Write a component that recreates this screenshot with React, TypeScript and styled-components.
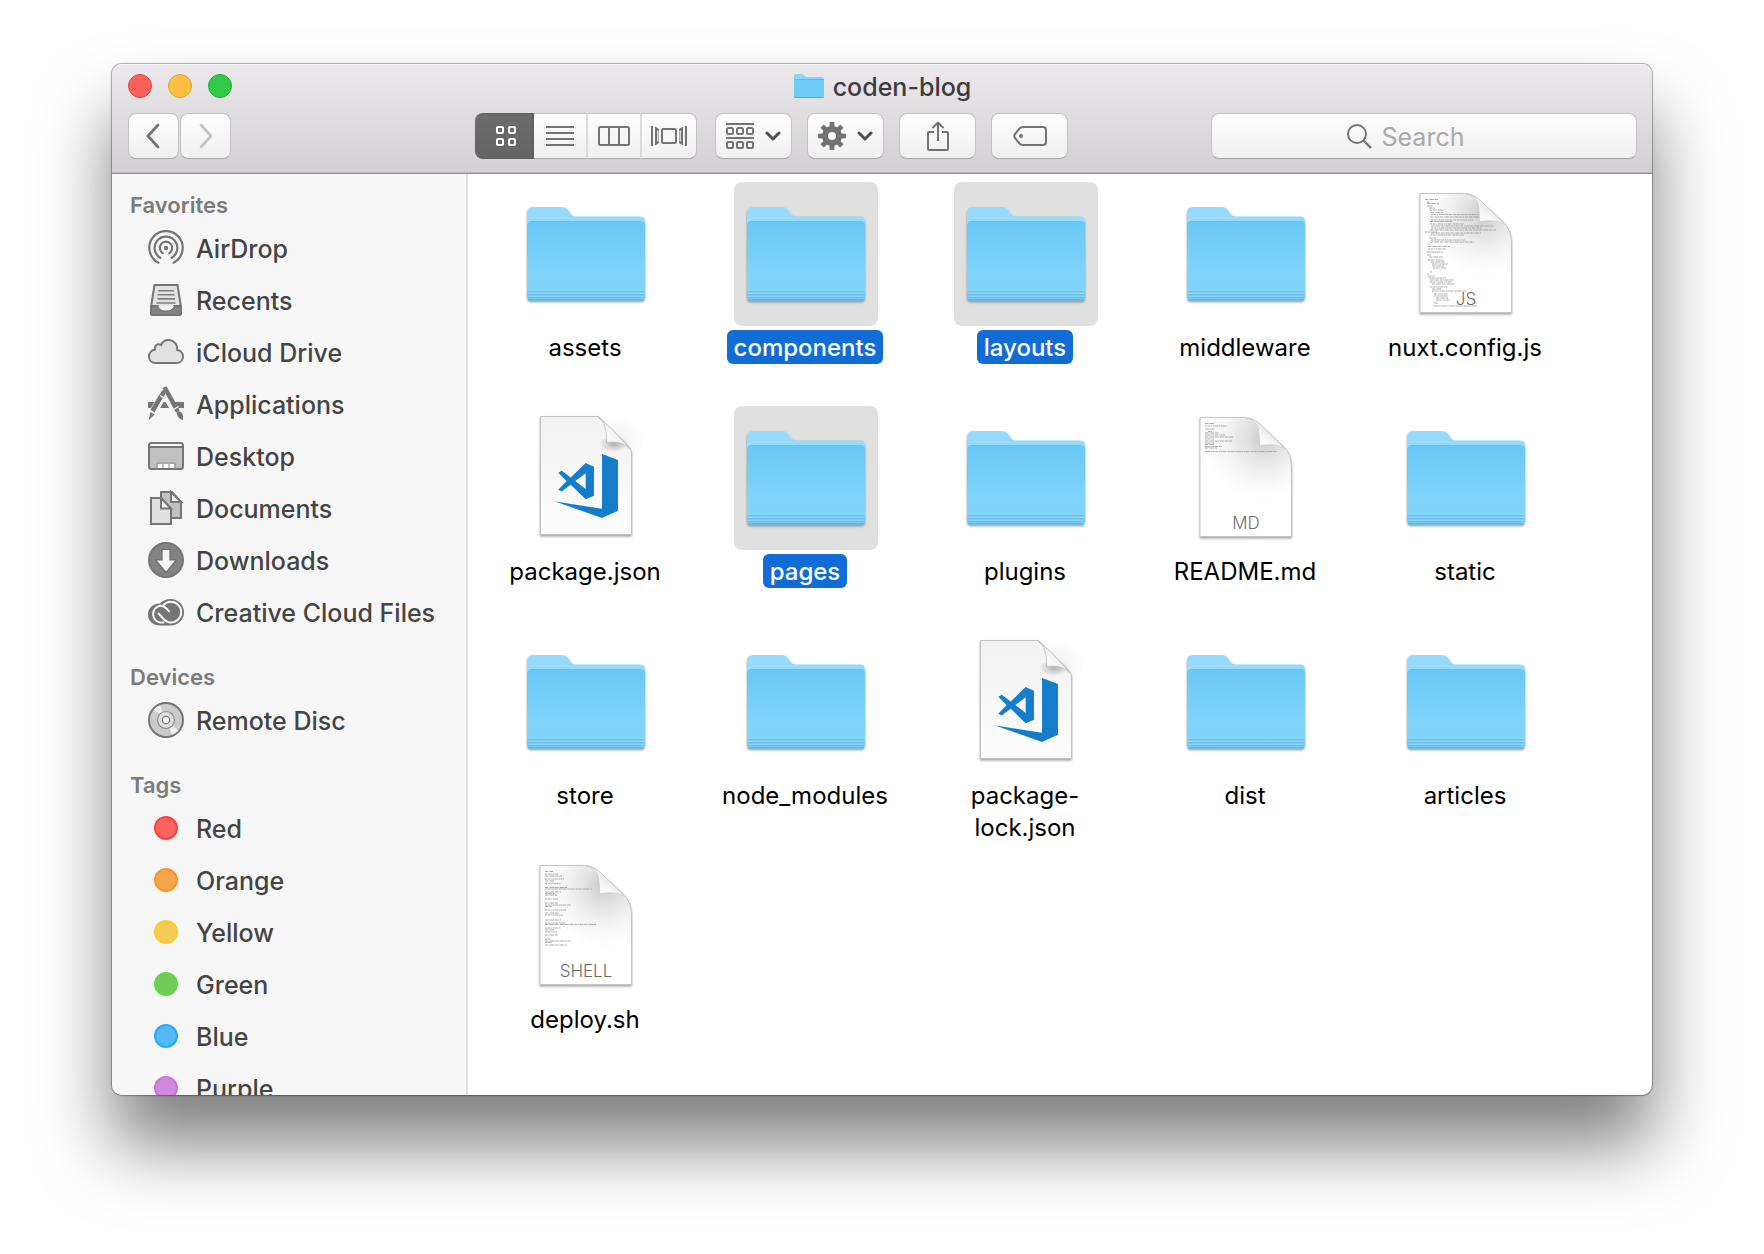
import React from "react";
import styled, { createGlobalStyle } from "styled-components";

const GlobalStyle = createGlobalStyle`
  *, *::before, *::after { box-sizing: border-box; }
  body {
    margin: 0;
    background: #fff;
    font-family: Inter, "Liberation Sans", sans-serif;
    font-size: 25px;
    line-height: 32px;
    color: #000;
  }
  button, input { font: inherit; color: inherit; }
  button { padding: 0; border: 0; background: none; }
  ul { list-style: none; margin: 0; padding: 0; }
  svg { display: block; flex: none; }
`;

/* ---------- layout ---------- */

const Desktop = styled.div`
  display: flex;
  height: 100vh;
  padding: 64px 112px 159px;
  overflow: hidden;
`;

const Window = styled.section`
  flex: 1;
  min-width: 0;
  display: flex;
  flex-direction: column;
  border-radius: 10px;
  overflow: hidden;
  background: #fff;
  box-shadow: 0 0 1px 1px rgba(0, 0, 0, 0.32), 0 50px 72px rgba(0, 0, 0, 0.5);
`;

const Header = styled.header`
  flex: none;
  padding: 0 15px 14px 16px;
  border-bottom: 1px solid #8f8d8f;
  background: linear-gradient(#ebe9ec, #d2d0d3);
  box-shadow: inset 0 1px 0 #f6f5f6, inset 0 -1px 0 #bdbbbe;
`;

const TitleBar = styled.div`
  display: grid;
  grid-template-columns: 1fr auto 1fr;
  align-items: center;
  height: 44px;
`;

const Lights = styled.div`
  display: flex;
  gap: 16px;
`;

const Light = styled.button<{ $fill: string; $edge: string }>`
  width: 24px;
  height: 24px;
  border-radius: 50%;
  border: 1px solid ${(p) => p.$edge};
  background: ${(p) => p.$fill};
`;

const Title = styled.h1`
  display: flex;
  align-items: center;
  gap: 8px;
  margin: 0;
  font-size: 25px;
  font-weight: 500;
  line-height: 32px;
  color: #3d3a3e;
  span { padding-top: 2px; }
`;

const Toolbar = styled.div`
  display: flex;
  align-items: center;
  margin-top: 5px;
`;

const Nav = styled.nav`
  flex: 0 0 347px;
  display: flex;
  gap: 1px;
`;

const Tools = styled.div`
  display: flex;
  gap: 15px;
  margin-left: 18px;
`;

const ToolButton = styled.button<{ $width: number }>`
  display: flex;
  align-items: center;
  justify-content: center;
  gap: 11px;
  width: ${(p) => p.$width}px;
  height: 46px;
  border: 1px solid #c3c1c4;
  border-bottom-color: #a9a7aa;
  border-radius: 8px;
  background: linear-gradient(#fdfdfd, #f0f0f0);
  color: #737373;
`;

const Segments = styled.div`
  display: flex;
`;

const Segment = styled.button<{ $active?: boolean }>`
  display: flex;
  align-items: center;
  justify-content: center;
  width: 54px;
  height: 46px;
  border: solid #c3c1c4;
  border-width: 1px 2px 1px 0;
  border-right-color: #dcdbdc;
  border-bottom-color: #a9a7aa;
  background: linear-gradient(#fdfdfd, #f0f0f0);
  color: #737373;
  &:first-child {
    width: 59px;
    padding-left: 5px;
    border-radius: 8px 0 0 8px;
  }
  &:last-child {
    width: 55px;
    border-radius: 0 8px 8px 0;
    border-right: 1px solid #c3c1c4;
  }
  ${(p) => p.$active && "background: linear-gradient(#6c6c6c, #646464); border-color: #606060; color: #fff;"}
`;

const SearchField = styled.label`
  flex: 0 1 426px;
  min-width: 180px;
  margin-left: auto;
  display: flex;
  align-items: center;
  justify-content: center;
  gap: 10px;
  height: 46px;
  border: 1px solid #c3c1c4;
  border-bottom-color: #a3a1a4;
  border-radius: 8px;
  background: linear-gradient(#fdfdfd, #f0f0f0);
  color: #737373;
  input {
    width: 120px;
    padding: 2px 0 0;
    border: 0;
    outline: 0;
    background: transparent;
  }
  input::placeholder { color: #a9a9a9; opacity: 1; }
`;

const Body = styled.div`
  flex: 1;
  min-height: 0;
  display: flex;
`;

const Sidebar = styled.aside`
  flex: 0 0 356px;
  display: flex;
  flex-direction: column;
  gap: 20px;
  padding-top: 12px;
  overflow: hidden;
  border-right: 2px solid #dedede;
  background: #f6f6f6;
`;

const SideHeading = styled.h2`
  margin: 0;
  padding: 2px 0 0 18px;
  font-size: 22px;
  line-height: 34px;
  font-weight: 600;
  color: #7b7b7b;
`;

const SideLink = styled.a`
  display: flex;
  align-items: center;
  gap: 12px;
  height: 52px;
  padding-left: 36px;
  font-weight: 500;
  color: #444;
  text-decoration: none;
  white-space: nowrap;
`;

const SideLabel = styled.span`
  padding-top: 2px;
`;

const TagDot = styled.span<{ $fill: string; $edge: string }>`
  width: 24px;
  height: 24px;
  margin: 0 6px;
  border-radius: 50%;
  border: 2px solid ${(p) => p.$edge};
  background: ${(p) => p.$fill};
`;

const FileGrid = styled.ul`
  && { padding: 8px 0 0 8px; }
  flex: 1;
  min-width: 0;
  display: grid;
  grid-template-columns: repeat(auto-fill, 220px);
  grid-auto-rows: 224px;
  align-content: start;
  overflow: hidden;
`;

const FileButton = styled.button`
  display: flex;
  flex-direction: column;
  align-items: center;
  gap: 4px;
  width: 100%;
`;

const FileIcon = styled.span<{ $selected?: boolean }>`
  border-radius: 8px;
  background: ${(p) => (p.$selected ? "#e0e0e0" : "transparent")};
`;

const FileName = styled.span<{ $selected?: boolean }>`
  max-width: 180px;
  margin-right: 2px;
  padding: 2px 7px 0;
  border-radius: 6px;
  font-size: 24px;
  font-weight: ${(p) => (p.$selected ? 500 : 400)};
  background: ${(p) => (p.$selected ? "#116cd6" : "transparent")};
  color: ${(p) => (p.$selected ? "#fff" : "#000")};
`;

/* ---------- file drawings ---------- */

const HiddenSvg = styled.svg`
  position: absolute;
`;

const Defs = () => (
  <HiddenSvg width="0" height="0" aria-hidden="true">
    <defs>
      <linearGradient id="front" x1="0" y1="0" x2="0" y2="1">
        <stop offset="0" stopColor="#69c8f6" />
        <stop offset="0.7" stopColor="#80d4fa" />
        <stop offset="0.86" stopColor="#7fd2f8" />
        <stop offset="1" stopColor="#74c6ee" />
      </linearGradient>
      <radialGradient id="paper" gradientUnits="userSpaceOnUse" cx="90" cy="32" r="62">
        <stop offset="0" stopColor="#c9c9c9" />
        <stop offset="0.3" stopColor="#e2e2e2" />
        <stop offset="0.65" stopColor="#f5f5f5" />
        <stop offset="1" stopColor="#ffffff" />
      </radialGradient>
      <linearGradient id="codePaper" x1="0" y1="0" x2="0" y2="1">
        <stop offset="0" stopColor="#f1f1f1" />
        <stop offset="1" stopColor="#fdfdfd" />
      </linearGradient>
      <linearGradient id="curl" x1="0.1" y1="0.9" x2="0.7" y2="0.3">
        <stop offset="0" stopColor="#ffffff" />
        <stop offset="0.5" stopColor="#f8f8f8" />
        <stop offset="1" stopColor="#dedede" />
      </linearGradient>
      <radialGradient id="curlShade" cx="0.5" cy="0.5" r="0.5">
        <stop offset="0" stopColor="#000" stopOpacity="0.34" />
        <stop offset="1" stopColor="#000" stopOpacity="0" />
      </radialGradient>
      <filter id="drop" x="-10%" y="-10%" width="120%" height="125%">
        <feDropShadow dx="0" dy="1.5" stdDeviation="1.3" floodColor="#000" floodOpacity="0.38" />
      </filter>
    </defs>
  </HiddenSvg>
);

const FolderArt = () => (
  <svg width="144" height="144" viewBox="0 0 144 144" aria-hidden="true">
    <g filter="url(#drop)">
      <path d="M13 31q0-6 6-6h29q4 0 6.5 3.5l2 3q2 3 5 3h64.500q5 0 5 5V114.500q0 4-4 4H17q-4 0-4-4z" fill="#97dcfe" />
      <path d="M13 44q0-4.500 4.500-4.500h108.500q5 0 5 4.500V114.500q0 4-4 4H17q-4 0-4-4z" fill="url(#front)" />
    </g>
    <path d="M14 40.500q1-1 4-1h107.500q4 0 5 1.500" fill="none" stroke="#5fbbe8" strokeWidth="0.800" />
    <path d="M13.500 109.500h117M13.500 112.500h117M13.500 115.500h117" stroke="#62b4dc" strokeOpacity="0.550" />
    <path d="M13.500 108.500h117M13.500 111.500h117M13.500 114.500h117" stroke="#92dcfc" strokeOpacity="0.500" />
    <path d="M14.500 117.800h115" stroke="#5eacd4" strokeWidth="1.200" />
  </svg>
);

type Line = [number, number, number];

const JS_LINES: Line[] = [
  [31, 17.5, 13], [33, 20, 3], [33, 21.5, 12], [33, 24, 6], [35, 26, 6], [36, 28, 14],
  [37, 30.5, 12], [37, 32.5, 48], [36, 35, 50], [37, 38, 42], [36, 39.5, 22], [36, 42, 34],
  [37, 44, 64], [37, 46, 50], [36, 48, 66], [31, 50, 12], [37, 51, 50], [36, 53, 34],
  [35, 56, 7], [37, 58, 34], [36, 60, 44], [34, 62, 2], [34, 64.5, 22], [34, 67, 18],
  [33, 70, 16], [33, 73, 4], [35, 75, 14], [34, 78, 16], [37, 80, 14], [38, 82, 16],
  [38, 84, 12], [39, 86, 14], [36, 90, 2], [33, 92, 2], [34, 94, 7], [35, 96, 17],
  [36, 98, 24], [36, 100, 22], [38, 102, 22], [36, 105, 18], [38, 107, 9], [38, 109, 34],
  [40, 112, 14], [40, 114, 14], [42, 116, 12], [42, 118, 14], [40, 121, 4], [39, 124, 44],
];

const MD_LINES: Line[] = [
  [31, 17.5, 9], [31, 20, 23], [31, 23, 10], [34, 25.5, 4], [31, 27, 14], [31, 29, 20],
  [31, 31, 28], [31, 33, 9], [31, 35, 27], [31, 37, 10], [31, 38.5, 9], [31, 40.5, 17],
  [31, 42, 12], [31, 45.5, 72],
];

const SH_LINES: Line[] = [
  [31, 17.5, 8], [31, 20, 14], [31, 22, 17], [31, 25, 19], [31, 27, 10], [31, 29.5, 16],
  [31, 33.5, 22], [31, 35, 47], [31, 38, 16], [31, 39.5, 10], [31, 41, 12], [31, 45, 13],
  [31, 49, 13], [31, 51, 26], [31, 52.5, 7], [31, 56, 22], [31, 59, 14], [31, 61, 18],
  [31, 66, 16], [31, 69, 20], [31, 70.5, 51], [31, 74, 16], [31, 76, 10], [31, 78, 12],
  [31, 81, 13], [31, 85, 6], [31, 87, 26], [31, 88.5, 7], [31, 91, 22],
];

const TextFileArt = ({ kind, lines }: { kind: string; lines: Line[] }) => (
  <svg width="144" height="144" viewBox="0 0 144 144" aria-hidden="true">
    <path
      d="M26 11.500H69C77 11.500 83 15 89 21L108 39C114.500 45 117.500 51 117.500 62V130.500H26z"
      fill="url(#paper)" stroke="#b9b9b9" strokeWidth="0.800" filter="url(#drop)"
    />
    {lines.map(([x, y, w], i) => (
      <path key={i} d={`M${x} ${y}h${w}`} stroke="#969696" strokeWidth="0.800" strokeDasharray={i % 2 ? "2 0.5 3 0.7 1 0.5" : "3 0.6 1 0.5 4 0.7"} />
    ))}
    <path d="M72 11.800C82 14 86 20 85.500 39.500C98 38 106 39 112 43.500L89 21C83 15 79 12.500 72 11.800z" fill="url(#curl)" stroke="#c9c9c9" strokeWidth="0.700" />
    <text x="72" y="123" textAnchor="middle" fontFamily="Inter, sans-serif" fontSize="17" fontWeight="300" fill="#6c6c6c">{kind}</text>
  </svg>
);

const JsonFileArt = () => (
  <svg width="144" height="144" viewBox="0 0 144 144" aria-hidden="true">
    <ellipse cx="103" cy="34" rx="28" ry="26" fill="url(#curlShade)" opacity="0.18" />
    <path d="M26.500 10.500H84L115 41Q117.500 44 117.500 48V128.500H26.500z" fill="url(#codePaper)" stroke="#c2c2c2" filter="url(#drop)" />
    <ellipse cx="100" cy="38" rx="15" ry="8" fill="url(#curlShade)" opacity="0.8" />
    <path d="M84 10.500C90 15 93 23 92.500 36.500C102 35 110 37 116 43L100 25z" fill="url(#curl)" stroke="#bdbdbd" strokeWidth="0.800" />
    <g fill="#167dca">
      <path d="M88 48l16 6v50.700L88 112 41 95.500l47 7.200z" />
      <path fillRule="evenodd" d="M71.700 57l8.300 3.700v29l-8.300 3.600-15-14.500-9 6.800-3.400-1.900 8.300-8.700-8.300-8.300 3.400-1.900 9 6.600zM71.700 67.300L61.300 75l10.400 8z" />
    </g>
  </svg>
);

/* ---------- toolbar icons ---------- */

const Chevron = () => (
  <svg width="16" height="10" viewBox="0 0 16 10" fill="none" stroke="#4f4f4f" strokeWidth="3" strokeLinecap="round" strokeLinejoin="round">
    <path d="M2 2l6 6 6-6" />
  </svg>
);

const Arrow = ({ d, color }: { d: string; color: string }) => (
  <svg width="16" height="26" viewBox="0 0 16 26" fill="none" stroke={color} strokeWidth="2.800" strokeLinecap="round" strokeLinejoin="round">
    <path d={d} />
  </svg>
);

const GridIcon = () => (
  <svg width="20" height="20" fill="none" stroke="currentColor" strokeWidth="2">
    {[1, 13].map((y) => [1, 13].map((x) => <rect key={`${x}-${y}`} x={x} y={y} width="6" height="6" rx="1" />))}
  </svg>
);

const ListIcon = () => (
  <svg width="28" height="20" stroke="currentColor" strokeWidth="2">
    <path d="M0 1h28M0 7h28M0 13h28M0 19h28" />
  </svg>
);

const ColumnsIcon = () => (
  <svg width="32" height="20" fill="none" stroke="currentColor" strokeWidth="2">
    <rect x="1" y="1" width="30" height="18" rx="1.500" />
    <path d="M11 1v18M21 1v18" />
  </svg>
);

const CoverIcon = () => (
  <svg width="36" height="20" fill="none" stroke="currentColor">
    <rect x="11" y="3" width="14" height="14" rx="1.500" strokeWidth="2" />
    <path d="M1 0v20M35 0v20" strokeWidth="2" />
    <path d="M4 0.500L8 3v14l-4 2.500zM32 0.500L28 3v14l4 2.500z" fill="currentColor" stroke="none" />
    <path d="M6.800 4.500v11M29.200 4.500v11" stroke="#f7f7f7" strokeWidth="1.200" />
  </svg>
);

const GroupIcon = () => (
  <svg width="28" height="26" fill="none" stroke="currentColor" strokeWidth="2">
    <path d="M0 1h28M0 15h28" />
    {[5, 19].map((y) => [1, 11, 21].map((x) => <rect key={`${x}-${y}`} x={x} y={y} width="6" height="6" rx="1.500" />))}
  </svg>
);

const GearIcon = () => (
  <svg width="28" height="28" viewBox="-14 -14 28 28">
    {[0, 45, 90, 135].map((a) => (
      <path key={a} d="M-3 0L-2.300-14h4.600L3 0 2.300 14h-4.600z" transform={`rotate(${a})`} fill="currentColor" />
    ))}
    <circle r="7" fill="none" stroke="currentColor" strokeWidth="6" />
    <circle r="4" fill="#f7f7f7" />
  </svg>
);

const ShareIcon = () => (
  <svg width="22" height="30" fill="none" stroke="currentColor" strokeWidth="2" strokeLinejoin="round">
    <path d="M7 11H2q-1 0-1 1v16q0 1 1 1h18q1 0 1-1V12q0-1-1-1h-5" />
    <path d="M11 20V1.500M5.500 7L11 1.500 16.500 7" />
  </svg>
);

const TagIcon = () => (
  <svg width="34" height="20" fill="none" stroke="currentColor" strokeWidth="2" strokeLinejoin="round">
    <path d="M10 1h20q3 0 3 3v12q0 3-3 3H10q-2 0-3.500-1.500L2 12q-1.500-2 0-4l4.500-5.500Q8 1 10 1z" />
    <circle cx="8" cy="10" r="2" fill="currentColor" stroke="none" />
  </svg>
);

const SearchIcon = () => (
  <svg width="25" height="26" fill="none" stroke="currentColor" strokeWidth="2">
    <circle cx="10" cy="11" r="9" />
    <path d="M16.500 17.500L24 25" strokeWidth="2.400" />
  </svg>
);

const TitleFolder = () => (
  <svg width="31" height="25" viewBox="0 0 31 25">
    <path d="M0 2q0-2 2-2h6q1.500 0 2.500 1.500L12 3h16q2 0 2 2v18q0 1-1 1H1q-1 0-1-1z" fill="#88d4fb" />
    <path d="M0 5.500h30V22q0 2-1 2H1q-1 0-1-2z" fill="#6fcdf8" />
    <path d="M0 5.500h30" stroke="#5db9e4" />
    <path d="M0.500 23.500h29" stroke="#4fa6cf" />
  </svg>
);

/* ---------- sidebar icons ---------- */

const Glyph = ({ children }: { children: React.ReactNode }) => (
  <svg width="36" height="36" viewBox="0 0 36 36" fill="none" stroke="#757575" strokeWidth="2" aria-hidden="true">{children}</svg>
);

const AirDropIcon = () => (
  <Glyph>
    <g strokeWidth="2.200" strokeLinecap="round">
      <path d="M10.500 32.700A16.700 16.700 0 1 1 25.500 32.700" />
      <path d="M12.300 27.800A11.400 11.400 0 1 1 23.700 27.800" />
      <path d="M14.800 23.200A6.200 6.200 0 1 1 21.200 23.200" />
    </g>
    <circle cx="18" cy="18" r="2.200" fill="#757575" stroke="none" />
  </Glyph>
);

const RecentsIcon = () => (
  <Glyph>
    <path d="M6.500 3h23L33 25v6q0 2-2 2H5q-2 0-2-2v-6z" fill="#e2e2e2" strokeLinejoin="round" />
    <path d="M3 24h7q2 5 8 5t8-5h7v7q0 2-2 2H5q-2 0-2-2z" fill="#828282" />
    <path d="M10 24q2 4.500 8 4.500t8-4.500z" fill="#f3f3f3" stroke="none" />
    <path d="M10 8.700h16M9.500 12.800h17M9.500 16.900h17.500M8.500 21h19" stroke="#808080" strokeWidth="1.600" />
  </Glyph>
);

const CloudIcon = () => (
  <Glyph>
    <path d="M8 29C3.500 29 1 26 1 22.500C1 18.500 4 16 7 15.500C6.500 11 9.500 9 13 11C14.500 7.500 18 5.700 21.500 6C26.500 6.500 29.800 11 29.300 16C33 16.500 35 19.500 35 22.500C35 26 32.500 29 28 29z" fill="#e2e2e2" />
  </Glyph>
);

const ApplicationsIcon = () => (
  <Glyph>
    <path d="M0 19h36" strokeWidth="6" />
    <g stroke="#f6f6f6" strokeWidth="8"><path d="M16 6L30 29M15 9L4 28" /></g>
    <path d="M13.500 9.500L4.500 25" strokeWidth="4.600" />
    <path d="M15.500 6.500L14 9" strokeWidth="4.600" strokeLinecap="round" />
    <path d="M2.500 26l4 2.500L0.500 34.500z" fill="#757575" stroke="none" />
    <path d="M17.500 3L29 24" strokeWidth="4.600" strokeLinecap="round" />
    <path d="M25.500 23.500l5-3M12 9.500l5 3" stroke="#f6f6f6" strokeWidth="1.200" />
    <path d="M28.500 27q3-3 5.500 0 2 3 1 7-5-1-6.500-7z" fill="#757575" stroke="none" />
  </Glyph>
);

const DesktopIcon = () => (
  <Glyph>
    <rect x="1" y="5" width="34" height="26" rx="2.500" fill="#c0c0c0" />
    <path d="M2.500 7h31" stroke="#f8f8f8" />
    <path d="M1 9h34" />
    <path d="M9 31v-6h18v6" strokeWidth="1" stroke="#909090" />
    <path d="M10 26h4v4h-4zM16 26h4v4h-4zM22 26h4v4h-4z" fill="#fff" stroke="none" />
  </Glyph>
);

const DocumentsIcon = () => (
  <Glyph>
    <path d="M13 2h11l9 10v16H13z" fill="#c2c2c2" />
    <path d="M23 2v10h10z" fill="#f6f6f6" />
    <path d="M3 8h10l10 11v15H3z" fill="#e0e0e0" />
    <path d="M13 8v10.500h10z" fill="#f6f6f6" />
  </Glyph>
);

const DownloadsIcon = () => (
  <Glyph>
    <circle cx="18" cy="18" r="17" fill="#838383" />
    <path d="M14 7.500h8V18h6.500L18 30.500 7.500 18H14z" fill="#f6f6f6" stroke="#6c6c6c" strokeWidth="1.200" />
  </Glyph>
);

const CreativeCloudIcon = () => (
  <Glyph>
    <path d="M12 31.500C5 31.500 0 27 0 20.500 0 14 5 9.500 12 9.500 14.500 6.500 18.500 5 22.500 5 30 5 36 10.500 36 18.300 36 26 30 31.500 22.500 31.500z" fill="#757575" stroke="none" />
    <g stroke="#f6f6f6" strokeLinecap="round">
      <path d="M15.500 28.500H12A8.500 8.500 0 0 1 12 11.800C15 11.800 17 13 19 15L21 17.300" />
      <path d="M15.500 11Q18.500 7.700 22.800 7.800A10.300 10.300 0 0 1 22.800 28.500C19.500 28.500 17.500 27 15.500 25L10.500 19.500" />
    </g>
  </Glyph>
);

const DiscIcon = () => (
  <Glyph>
    <circle cx="18" cy="18" r="17" fill="#cbcbcb" />
    <path d="M18 18L5.500 7.500A16 16 0 0 1 12 3.200zM18 18l12.500 10.500A16 16 0 0 1 24 32.800z" fill="#efefef" stroke="none" />
    <circle cx="18" cy="18" r="8.500" fill="#dedede" strokeWidth="1.200" stroke="#8c8c8c" />
    <circle cx="18" cy="18" r="3.700" fill="#f6f6f6" strokeWidth="1.200" />
  </Glyph>
);

/* ---------- data ---------- */

const FAVORITES = [
  { name: "AirDrop", Icon: AirDropIcon },
  { name: "Recents", Icon: RecentsIcon },
  { name: "iCloud Drive", Icon: CloudIcon },
  { name: "Applications", Icon: ApplicationsIcon },
  { name: "Desktop", Icon: DesktopIcon },
  { name: "Documents", Icon: DocumentsIcon },
  { name: "Downloads", Icon: DownloadsIcon },
  { name: "Creative Cloud Files", Icon: CreativeCloudIcon },
];

const TAGS = [
  { name: "Red", fill: "#ff6361", edge: "#fc3f3c" },
  { name: "Orange", fill: "#f6a54d", edge: "#fd9426" },
  { name: "Yellow", fill: "#f3cd56", edge: "#fdca2e" },
  { name: "Green", fill: "#72ca59", edge: "#63d744" },
  { name: "Blue", fill: "#52b9f3", edge: "#27a9f3" },
  { name: "Purple", fill: "#cf8ae0", edge: "#c776de" },
];

type FileItem = { name: string; kind?: "js" | "json" | "md" | "sh"; selected?: boolean };

const FILES: FileItem[] = [
  { name: "assets" },
  { name: "components", selected: true },
  { name: "layouts", selected: true },
  { name: "middleware" },
  { name: "nuxt.config.js", kind: "js" },
  { name: "package.json", kind: "json" },
  { name: "pages", selected: true },
  { name: "plugins" },
  { name: "README.md", kind: "md" },
  { name: "static" },
  { name: "store" },
  { name: "node_modules" },
  { name: "package-lock.json", kind: "json" },
  { name: "dist" },
  { name: "articles" },
  { name: "deploy.sh", kind: "sh" },
];

const FileArt = ({ kind }: { kind?: FileItem["kind"] }) => {
  switch (kind) {
    case "js": return <TextFileArt kind="JS" lines={JS_LINES} />;
    case "md": return <TextFileArt kind="MD" lines={MD_LINES} />;
    case "sh": return <TextFileArt kind="SHELL" lines={SH_LINES} />;
    case "json": return <JsonFileArt />;
    default: return <FolderArt />;
  }
};

export default function App() {
  return (
    <Desktop>
      <GlobalStyle />
      <Defs />
      <Window>
        <Header>
          <TitleBar>
            <Lights>
              <Light aria-label="Close" $fill="#fd615c" $edge="#e14640" />
              <Light aria-label="Minimize" $fill="#fdbe41" $edge="#dfa033" />
              <Light aria-label="Zoom" $fill="#34ca49" $edge="#25ab33" />
            </Lights>
            <Title><TitleFolder /><span>coden-blog</span></Title>
          </TitleBar>
          <Toolbar>
            <Nav aria-label="History">
              <ToolButton $width={51} aria-label="Back"><Arrow d="M12 2L2 13l10 11" color="#737373" /></ToolButton>
              <ToolButton $width={51} aria-label="Forward"><Arrow d="M3 2l10 11L3 24" color="#c4c4c4" /></ToolButton>
            </Nav>
            <Segments role="group" aria-label="View">
              <Segment $active aria-pressed="true" aria-label="Icons"><GridIcon /></Segment>
              <Segment aria-label="List"><ListIcon /></Segment>
              <Segment aria-label="Columns"><ColumnsIcon /></Segment>
              <Segment aria-label="Cover Flow"><CoverIcon /></Segment>
            </Segments>
            <Tools>
              <ToolButton $width={77} aria-label="Group"><GroupIcon /><Chevron /></ToolButton>
              <ToolButton $width={77} aria-label="Actions"><GearIcon /><Chevron /></ToolButton>
              <ToolButton $width={77} aria-label="Share"><ShareIcon /></ToolButton>
              <ToolButton $width={77} aria-label="Edit tags"><TagIcon /></ToolButton>
            </Tools>
            <SearchField>
              <SearchIcon />
              <input type="text" placeholder="Search" aria-label="Search" />
            </SearchField>
          </Toolbar>
        </Header>
        <Body>
          <Sidebar>
            <section>
              <SideHeading>Favorites</SideHeading>
              {FAVORITES.map(({ name, Icon }) => (
                <SideLink key={name} href="#"><Icon /><SideLabel>{name}</SideLabel></SideLink>
              ))}
            </section>
            <section>
              <SideHeading>Devices</SideHeading>
              <SideLink href="#"><DiscIcon /><SideLabel>Remote Disc</SideLabel></SideLink>
            </section>
            <section>
              <SideHeading>Tags</SideHeading>
              {TAGS.map((t) => (
                <SideLink key={t.name} href="#"><TagDot $fill={t.fill} $edge={t.edge} /><SideLabel>{t.name}</SideLabel></SideLink>
              ))}
            </section>
          </Sidebar>
          <FileGrid>
            {FILES.map((f) => (
              <li key={f.name}>
                <FileButton aria-pressed={!!f.selected}>
                  <FileIcon $selected={f.selected}><FileArt kind={f.kind} /></FileIcon>
                  <FileName $selected={f.selected}>{f.name}</FileName>
                </FileButton>
              </li>
            ))}
          </FileGrid>
        </Body>
      </Window>
    </Desktop>
  );
}
